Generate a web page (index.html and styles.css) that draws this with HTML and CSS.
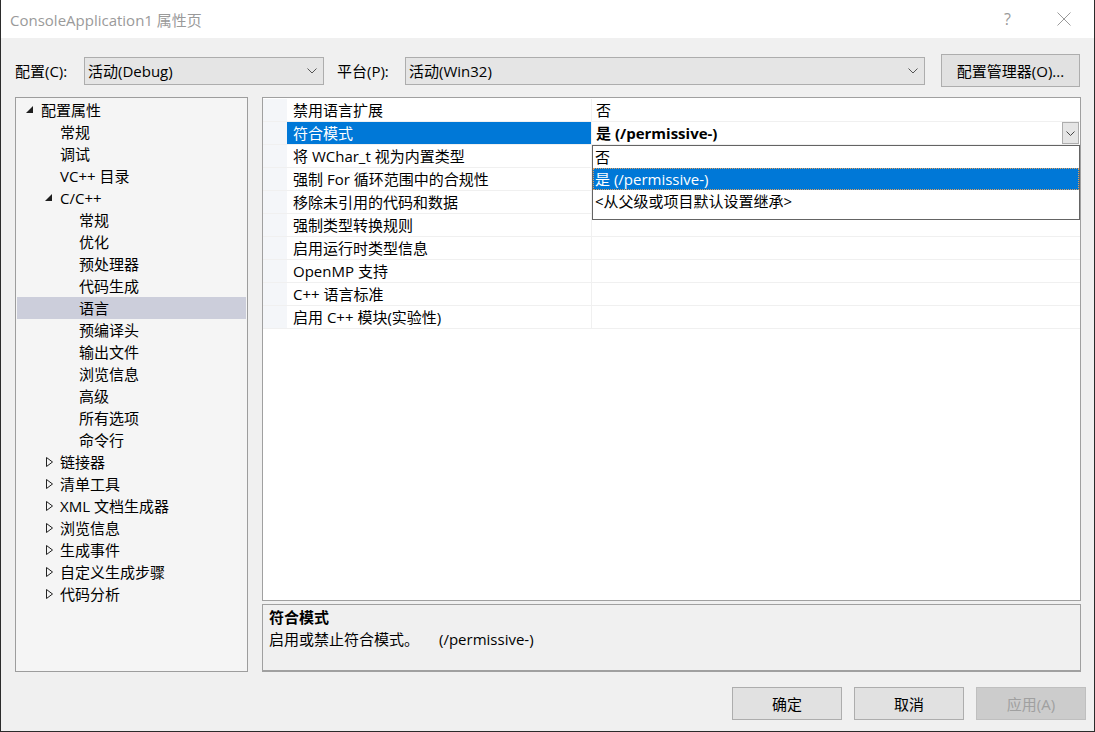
FILE: index.html
```html
<!DOCTYPE html>
<html lang="zh-CN">
<head>
    <meta charset="UTF-8">
    <title>ConsoleApplication1 属性页</title>
    <link rel="stylesheet" href="styles.css">
</head>
<body>
<div class="window">
    <div class="titlebar">
        <span class="title">ConsoleApplication1 属性页</span>
        <span class="help">?</span>
        <span class="close">
            <svg width="14" height="14" viewBox="0 0 14 14"><path d="M0.5 0.5 L13.5 13.5 M13.5 0.5 L0.5 13.5" stroke="#9a9a9a" stroke-width="1" fill="none"/></svg>
        </span>
    </div>

    <div class="content">
        <div class="config-row">
            <label class="cfg-label">配置(C):</label>
            <div class="combo combo-config">
                <span>活动(Debug)</span>
                <svg class="chev" width="10" height="6" viewBox="0 0 10 6"><path d="M0.5 0.5 L5 5 L9.5 0.5" stroke="#555" fill="none"/></svg>
            </div>
            <label class="platform-label">平台(P):</label>
            <div class="combo combo-platform">
                <span>活动(Win32)</span>
                <svg class="chev" width="10" height="6" viewBox="0 0 10 6"><path d="M0.5 0.5 L5 5 L9.5 0.5" stroke="#555" fill="none"/></svg>
            </div>
            <button class="btn btn-manager">配置管理器(O)...</button>
        </div>

        <div class="main">
            <div class="tree">
                <div class="node lv0"><span class="exp open"></span>配置属性</div>
                <div class="node lv1"><span class="exp"></span>常规</div>
                <div class="node lv1"><span class="exp"></span>调试</div>
                <div class="node lv1"><span class="exp"></span>VC++ 目录</div>
                <div class="node lv1"><span class="exp open"></span>C/C++</div>
                <div class="node lv2"><span class="exp"></span>常规</div>
                <div class="node lv2"><span class="exp"></span>优化</div>
                <div class="node lv2"><span class="exp"></span>预处理器</div>
                <div class="node lv2"><span class="exp"></span>代码生成</div>
                <div class="node lv2 selected"><span class="exp"></span>语言</div>
                <div class="node lv2"><span class="exp"></span>预编译头</div>
                <div class="node lv2"><span class="exp"></span>输出文件</div>
                <div class="node lv2"><span class="exp"></span>浏览信息</div>
                <div class="node lv2"><span class="exp"></span>高级</div>
                <div class="node lv2"><span class="exp"></span>所有选项</div>
                <div class="node lv2"><span class="exp"></span>命令行</div>
                <div class="node lv1"><span class="exp closed"></span>链接器</div>
                <div class="node lv1"><span class="exp closed"></span>清单工具</div>
                <div class="node lv1"><span class="exp closed"></span>XML 文档生成器</div>
                <div class="node lv1"><span class="exp closed"></span>浏览信息</div>
                <div class="node lv1"><span class="exp closed"></span>生成事件</div>
                <div class="node lv1"><span class="exp closed"></span>自定义生成步骤</div>
                <div class="node lv1"><span class="exp closed"></span>代码分析</div>
            </div>

            <div class="right">
                <div class="grid">
                    <div class="prop"><div class="margin"></div><div class="name">禁用语言扩展</div><div class="value">否</div></div>
                    <div class="prop active">
                        <div class="margin"></div>
                        <div class="name">符合模式</div>
                        <div class="value bold">
                            <span>是 (/permissive-)</span>
                            <span class="drop-btn">
                                <svg width="9" height="5" viewBox="0 0 9 5"><path d="M0.5 0.5 L4.5 4.5 L8.5 0.5" stroke="#444" fill="none"/></svg>
                            </span>
                        </div>
                    </div>
                    <div class="prop"><div class="margin"></div><div class="name">将 WChar_t 视为内置类型</div><div class="value"></div></div>
                    <div class="prop"><div class="margin"></div><div class="name">强制 For 循环范围中的合规性</div><div class="value"></div></div>
                    <div class="prop"><div class="margin"></div><div class="name">移除未引用的代码和数据</div><div class="value"></div></div>
                    <div class="prop"><div class="margin"></div><div class="name">强制类型转换规则</div><div class="value"></div></div>
                    <div class="prop"><div class="margin"></div><div class="name">启用运行时类型信息</div><div class="value"></div></div>
                    <div class="prop"><div class="margin"></div><div class="name">OpenMP 支持</div><div class="value"></div></div>
                    <div class="prop"><div class="margin"></div><div class="name">C++ 语言标准</div><div class="value"></div></div>
                    <div class="prop"><div class="margin"></div><div class="name">启用 C++ 模块(实验性)</div><div class="value"></div></div>

                    <!-- open list of the 符合模式 combo -->
                    <div class="droplist">
                        <div class="opt">否</div>
                        <div class="opt chosen">是 (/permissive-)</div>
                        <div class="opt">&lt;从父级或项目默认设置继承&gt;</div>
                    </div>
                </div>

                <div class="desc">
                    <div class="desc-title">符合模式</div>
                    <div class="desc-text">启用或禁止符合模式。<span class="switch">(/permissive-)</span></div>
                </div>
            </div>
        </div>

        <div class="buttons">
            <button class="btn btn-dlg">确定</button>
            <button class="btn btn-dlg">取消</button>
            <button class="btn btn-dlg" disabled>应用(A)</button>
        </div>
    </div>
</div>
</body>
</html>
```

FILE: styles.css
```css
*,
*::before,
*::after {
    box-sizing: border-box;
}

body {
    margin: 0;
    font-family: "Open Sans", "Noto Sans CJK SC", sans-serif;
    font-size: 15px;
    color: #000;
    background: #3a3a3a;
}

.window {
    width: 1095px;
    height: 732px;
    background: #f0f0f0;
    border-left: 1px solid #2b2b2b;
    border-right: 1px solid #2b2b2b;
    border-bottom: 1px solid #2b2b2b;
    overflow: hidden;
}

.titlebar {
    height: 38px;
    background: #fff;
    display: flex;
    align-items: center;
    padding-left: 9px;
}

.title {
    color: #9a9a9a;
    flex: 1;
}

.help {
    color: #9a9a9a;
    font-size: 16px;
    width: 16px;
    margin-right: 37px;
}

.close {
    display: flex;
    margin-right: 23px;
}

.content {
    padding: 16px 0 0 14px;
}

/* configuration / platform row */
.config-row {
    display: flex;
    align-items: center;
    height: 33px;
}

.cfg-label {
    width: 69px;
}

.platform-label {
    width: 68px;
    margin-left: 13px;
}

.combo {
    height: 28px;
    background: #e5e5e5;
    border: 1px solid #adadad;
    display: flex;
    align-items: center;
    justify-content: space-between;
    padding: 0 6px 0 3px;
}

.combo-config {
    width: 240px;
}

.combo-platform {
    width: 520px;
}

.btn {
    font-family: inherit;
    font-size: 15px;
    color: #000;
    background: #e1e1e1;
    border: 1px solid #adadad;
    padding: 0;
}

.btn-manager {
    width: 139px;
    height: 33px;
    margin-left: 16px;
}

/* tree + grid */
.main {
    display: flex;
    margin-top: 10px;
    height: 575px;
}

.tree {
    width: 233px;
    background: #f5f5f5;
    border: 1px solid #9d9d9d;
    padding: 1px 1px;
}

.node {
    height: 22px;
    line-height: 22px;
    display: flex;
    align-items: center;
    white-space: nowrap;
}

.node.lv0 { padding-left: 5px; }
.node.lv1 { padding-left: 24px; }
.node.lv2 { padding-left: 43px; }

.node.selected {
    background: #cccedb;
}

.exp {
    width: 19px;
    height: 22px;
    flex: none;
    position: relative;
}

.exp.open::after {
    content: "";
    position: absolute;
    left: 4px;
    top: 7px;
    border-style: solid;
    border-width: 0 0 7px 7px;
    border-color: transparent transparent #1e1e1e transparent;
}

.exp.closed::after {
    content: "";
    position: absolute;
    left: 5px;
    top: 6px;
    width: 8px;
    height: 10px;
    background: no-repeat url("data:image/svg+xml;utf8,<svg xmlns='http://www.w3.org/2000/svg' width='8' height='10'><path d='M0.5 0.5 L6.5 5 L0.5 9.5 Z' fill='none' stroke='%23222' stroke-width='1'/></svg>");
}

.right {
    width: 819px;
    margin-left: 14px;
    display: flex;
    flex-direction: column;
}

.grid {
    position: relative;
    height: 504px;
    background: #fff;
    border: 1px solid #a0a0a0;
    padding-top: 1px;
}

.prop {
    display: flex;
    height: 23px;
    line-height: 22px;
    border-bottom: 1px solid #f0f0f0;
}

.prop .margin {
    width: 24px;
    background: #f4f6f9;
}

.prop .name {
    width: 305px;
    padding-left: 6px;
    border-right: 1px solid #f0f0f0;
    white-space: nowrap;
}

.prop .value {
    flex: 1;
    padding-left: 4px;
    display: flex;
    justify-content: space-between;
}

.prop.active .name {
    background: #0078d7;
    color: #fff;
}

.value.bold {
    font-weight: 700;
}

.drop-btn {
    width: 17px;
    height: 22px;
    margin-right: 1px;
    background: #e5e5e5;
    border: 1px solid #adadad;
    display: flex;
    align-items: center;
    justify-content: center;
}

.droplist {
    position: absolute;
    left: 329px;
    top: 47px;
    width: 488px;
    height: 75px;
    background: #fff;
    border: 1px solid #646464;
}

.opt {
    height: 22px;
    line-height: 22px;
    padding-left: 2px;
}

.opt.chosen {
    background: #0078d7;
    color: #fff;
    outline: 1px dotted #e0a060;
    outline-offset: -1px;
}

.desc {
    margin-top: 3px;
    height: 68px;
    border: 1px solid #a0a0a0;
    border-bottom-width: 2px;
    padding: 1px 0 0 6px;
    line-height: 22px;
}

.desc-title {
    font-weight: 700;
}

.switch {
    margin-left: 20px;
}

/* dialog buttons */
.buttons {
    display: flex;
    justify-content: flex-end;
    gap: 12px;
    margin-top: 15px;
    padding-right: 8px;
}

.btn-dlg {
    width: 110px;
    height: 33px;
}

.btn-dlg:disabled {
    background: #cccccc;
    border-color: #bfbfbf;
    color: #a0a0a0;
}
```
